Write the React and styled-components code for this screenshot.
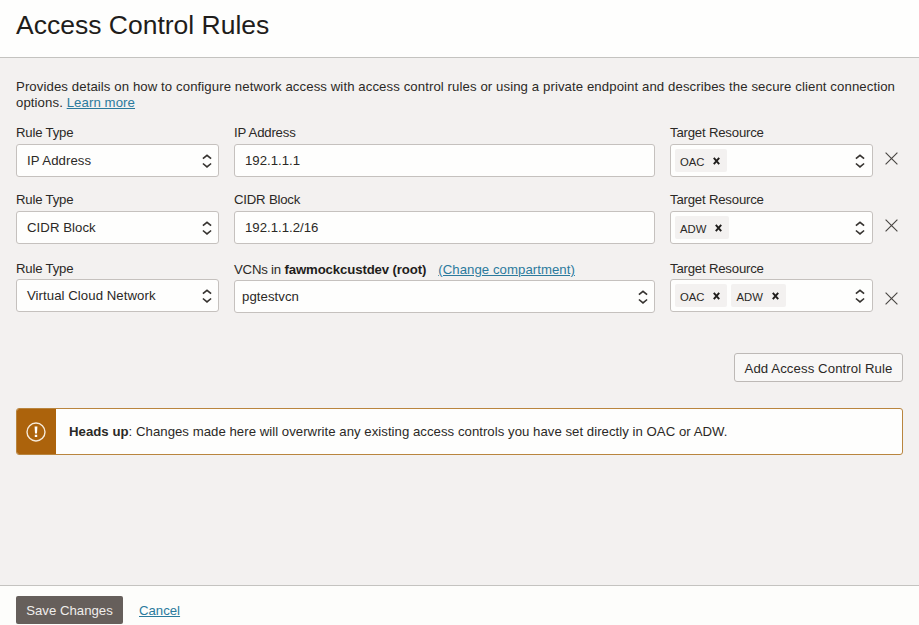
import { useState } from "react";
import styled, { createGlobalStyle } from "styled-components";

const initialRules = [
  { id: 1, type: "IP Address", label: "IP Address", value: "192.1.1.1", targets: ["OAC"] },
  { id: 2, type: "CIDR Block", label: "CIDR Block", value: "192.1.1.2/16", targets: ["ADW"] },
  {
    id: 3,
    type: "Virtual Cloud Network",
    compartment: "fawmockcustdev (root)",
    value: "pgtestvcn",
    targets: ["OAC", "ADW"],
  },
];

function Chevrons() {
  return (
    <ChevronIcon viewBox="0 0 10 14">
      <path d="M.9 4.7 5 1.3l4.1 3.4M.9 9.5 5 12.9l4.1-3.4" />
    </ChevronIcon>
  );
}

function RuleRow({ rule, onRemove, onRemoveTarget }) {
  const isNetwork = Boolean(rule.compartment);

  return (
    <Row $last={isNetwork}>
      <Field>
        <Label $tight={isNetwork}>Rule Type</Label>
        <Control>
          <Value>{rule.type}</Value>
          <Chevrons />
        </Control>
      </Field>
      {isNetwork ? (
        <Field $low>
          <Label $tight>
            VCNs in <b>{rule.compartment}</b>
            <CompartmentLink href="#">(Change compartment)</CompartmentLink>
          </Label>
          <Control $narrow>
            <Value>{rule.value}</Value>
            <Chevrons />
          </Control>
        </Field>
      ) : (
        <Field>
          <Label>{rule.label}</Label>
          <TextInput aria-label={rule.label} defaultValue={rule.value} />
        </Field>
      )}
      <Field>
        <Label $tight={isNetwork}>Target Resource</Label>
        <Control $chips>
          {rule.targets.map((target) => (
            <Chip key={target}>
              <span>{target}</span>
              <ChipButton
                aria-label={`Remove ${target}`}
                onClick={() => onRemoveTarget(rule.id, target)}
              >
                <svg width="7" height="8" viewBox="0 0 7 8">
                  <path d="M.8.8 6.2 7.2M6.2.8.8 7.2" />
                </svg>
              </ChipButton>
            </Chip>
          ))}
          <Chevrons />
        </Control>
      </Field>
      <RemoveButton
        $low={isNetwork}
        aria-label="Remove rule"
        onClick={() => onRemove(rule.id)}
      >
        <svg width="13" height="13" viewBox="0 0 13 13">
          <path d="M.6.6 12.4 12.4M12.4.6.6 12.4" />
        </svg>
      </RemoveButton>
    </Row>
  );
}

export default function App() {
  const [rules, setRules] = useState(initialRules);

  function addRule() {
    const id = Math.max(0, ...rules.map((rule) => rule.id)) + 1;
    setRules([
      ...rules,
      { id, type: "IP Address", label: "IP Address", value: "", targets: [] },
    ]);
  }

  function removeRule(id) {
    setRules(rules.filter((rule) => rule.id !== id));
  }

  function removeTarget(id, target) {
    setRules(
      rules.map((rule) =>
        rule.id === id
          ? { ...rule, targets: rule.targets.filter((name) => name !== target) }
          : rule
      )
    );
  }

  return (
    <>
      <GlobalStyle />
      <Page>
        <Header>
          <Title>Access Control Rules</Title>
        </Header>
        <Main>
          <Intro>
            Provides details on how to configure network access with access
            control rules or using a private endpoint and describes the secure
            client connection
            <br />
            options. <Link href="#">Learn more</Link>
          </Intro>
          {rules.map((rule) => (
            <RuleRow
              key={rule.id}
              rule={rule}
              onRemove={removeRule}
              onRemoveTarget={removeTarget}
            />
          ))}
          <AddButton onClick={addRule}>Add Access Control Rule</AddButton>
          <Alert>
            <AlertMark>
              <svg width="20" height="20" viewBox="0 0 20 20">
                <circle cx="10" cy="10" r="9" />
                <path d="M8.6 4.4h2.8l-.4 7H9zM8.8 12.8h2.4v2.3H8.8z" />
              </svg>
            </AlertMark>
            <AlertText>
              <b>Heads up</b>: Changes made here will overwrite any existing
              access controls you have set directly in OAC or ADW.
            </AlertText>
          </Alert>
        </Main>
        <Footer>
          <SaveButton>Save Changes</SaveButton>
          <Link href="#">Cancel</Link>
        </Footer>
      </Page>
    </>
  );
}

const GlobalStyle = createGlobalStyle`
  * {
    box-sizing: border-box;
  }

  body {
    margin: 0;
    background-color: #f3f1f0;
    color: #2b2926;
    font-family: "Liberation Sans", Arial, sans-serif;
    font-size: 13.2px;
    line-height: 16px;
  }

  button,
  input {
    color: inherit;
    font: inherit;
  }
`;

const Page = styled.div`
  display: flex;
  flex-direction: column;
  height: 100vh;
  overflow: hidden;
`;

const Header = styled.header`
  flex: none;
  height: 58px;
  padding: 10px 16px 0;
  background-color: #fefefd;
  border-bottom: 1px solid #c4c3c0;
`;

const Title = styled.h1`
  margin: 0;
  color: #1f1d1b;
  font-size: 26.5px;
  font-weight: 400;
  line-height: 30px;
`;

const Main = styled.main`
  display: flex;
  flex: 1;
  flex-direction: column;
  padding: 21px 16px 0;
`;

const Intro = styled.p`
  margin: 0 0 13px;
  letter-spacing: 0.09px;
  white-space: nowrap;
`;

const Link = styled.a`
  color: #2b7a9d;
  text-decoration: underline;
  text-underline-offset: 1px;
`;

const CompartmentLink = styled(Link)`
  margin-left: 12px;
  letter-spacing: 0.05px;
`;

const Row = styled.div`
  display: grid;
  grid-template-columns: 203px 421px 203px 13px;
  column-gap: 15px;
  height: ${({ $last }) => ($last ? "54px" : "67px")};
  margin-top: ${({ $last }) => ($last ? "2px" : "0")};
`;

const Field = styled.div`
  display: flex;
  flex-direction: column;
  padding-top: ${({ $low }) => ($low ? "2px" : "1px")};
`;

const Label = styled.div`
  height: ${({ $tight }) => ($tight ? "18px" : "19px")};
  letter-spacing: -0.2px;
  white-space: nowrap;

  b {
    color: #1f1d1b;
    letter-spacing: -0.12px;
  }
`;

const Control = styled.div`
  display: flex;
  align-items: center;
  height: 33px;
  padding-left: ${({ $chips, $narrow }) => ($chips ? "4px" : $narrow ? "7px" : "10px")};
  padding-right: ${({ $chips }) => ($chips ? "7px" : "6px")};
  background-color: #fefefd;
  border: 1px solid #c5c1be;
  border-radius: 3px;
`;

const TextInput = styled.input`
  width: 100%;
  height: 33px;
  padding: 0 10px;
  background-color: #fefefd;
  border: 1px solid #c5c1be;
  border-radius: 3px;
  outline: none;
`;

const Value = styled.span`
  letter-spacing: 0.06px;
  white-space: nowrap;
`;

const ChevronIcon = styled.svg`
  width: 10px;
  height: 14px;
  margin-left: auto;
  fill: none;
  stroke: #35322f;
  stroke-width: 1.6;
`;

const Chip = styled.span`
  display: flex;
  align-items: center;
  gap: 9px;
  height: 23px;
  margin-right: 4px;
  padding: 0 7px 0 5px;
  background-color: #f3f1f0;
  border-radius: 2px;
  font-size: 11.3px;

  span {
    padding-top: 2px;
  }
`;

const ChipButton = styled.button`
  display: flex;
  padding: 0;
  background: none;
  border: none;

  svg {
    stroke: #1f1d1b;
    stroke-width: 1.9;
  }
`;

const RemoveButton = styled.button`
  align-self: start;
  display: flex;
  margin: ${({ $low }) => ($low ? "32px" : "28px")} 0 0 -3px;
  padding: 0;
  background: none;
  border: none;

  svg {
    stroke: #494643;
    stroke-width: 1.15;
  }
`;

const AddButton = styled.button`
  align-self: flex-end;
  width: 169px;
  height: 29px;
  margin-top: 39px;
  padding: 2px 0 0;
  background-color: #f8f7f6;
  border: 1px solid #bdb9b6;
  border-radius: 3px;
  letter-spacing: 0.09px;
  white-space: nowrap;
`;

const Alert = styled.div`
  display: flex;
  height: 47px;
  margin-top: 26px;
  background-color: #fefefd;
  border: 1px solid #b9853e;
  border-radius: 3px;
  overflow: hidden;
`;

const AlertMark = styled.div`
  display: flex;
  align-items: center;
  justify-content: center;
  width: 40px;
  margin: -1px 0 -1px -1px;
  background-color: #ac630c;

  circle {
    fill: none;
    stroke: #f6e9d8;
    stroke-width: 1.4;
  }

  path {
    fill: #fff;
  }
`;

const AlertText = styled.p`
  align-self: center;
  margin: 0 0 0 13px;
  padding-top: 1px;
  letter-spacing: 0.03px;
  white-space: nowrap;
`;

const Footer = styled.footer`
  display: flex;
  flex: none;
  align-items: flex-start;
  gap: 16px;
  height: 40px;
  padding: 10px 16px 0;
  background-color: #fdfdfb;
  border-top: 1px solid #c4c3c0;

  a {
    padding-top: 7px;
  }
`;

const SaveButton = styled.button`
  width: 107px;
  height: 28px;
  padding: 2px 0 0;
  background-color: #665f5b;
  border: none;
  border-radius: 2px;
  color: #f0eeec;
  white-space: nowrap;
`;
